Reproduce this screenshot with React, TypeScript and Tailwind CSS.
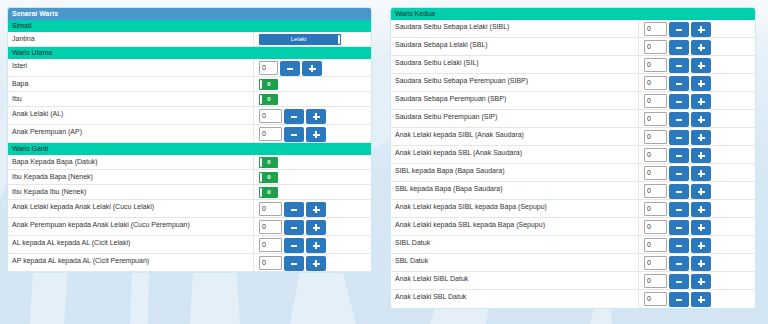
import React from "react";

type Kind = "count" | "narrow" | "toggle";
type Row = { label: string; kind: Kind } | { section: string };

const LEFT: Row[] = [
  { section: "Waris Utama" },
  { label: "Isteri", kind: "narrow" },
  { label: "Bapa", kind: "toggle" },
  { label: "Ibu", kind: "toggle" },
  { label: "Anak Lelaki (AL)", kind: "count" },
  { label: "Anak Perempuan (AP)", kind: "count" },
  { section: "Waris Ganti" },
  { label: "Bapa Kepada Bapa (Datuk)", kind: "toggle" },
  { label: "Ibu Kepada Bapa (Nenek)", kind: "toggle" },
  { label: "Ibu Kepada Ibu (Nenek)", kind: "toggle" },
  { label: "Anak Lelaki kepada Anak Lelaki (Cucu Lelaki)", kind: "count" },
  { label: "Anak Perempuan kepada Anak Lelaki (Cucu Perempuan)", kind: "count" },
  { label: "AL kepada AL kepada AL (Cicit Lelaki)", kind: "count" },
  { label: "AP kepada AL kepada AL (Cicit Perempuan)", kind: "count" },
];

const RIGHT: string[] = [
  "Saudara Seibu Sebapa Lelaki (SIBL)",
  "Saudara Sebapa Lelaki (SBL)",
  "Saudara Seibu Lelaki (SIL)",
  "Saudara Seibu Sebapa Perempuan (SIBP)",
  "Saudara Sebapa Perempuan (SBP)",
  "Saudara Seibu Perempuan (SIP)",
  "Anak Lelaki kepada SIBL (Anak Saudara)",
  "Anak Lelaki kepada SBL (Anak Saudara)",
  "SIBL kepada Bapa (Bapa Saudara)",
  "SBL kepada Bapa (Bapa Saudara)",
  "Anak Lelaki kepada SIBL kepada Bapa (Sepupu)",
  "Anak Lelaki kepada SBL kepada Bapa (Sepupu)",
  "SIBL Datuk",
  "SBL Datuk",
  "Anak Lelaki SIBL Datuk",
  "Anak Lelaki SBL Datuk",
];

function Stepper({ narrow }: { narrow?: boolean }) {
  return (
    <div className="flex items-start gap-[2px] pl-[5px] pt-[2px]">
      <div
        className={`${narrow ? "w-[19px]" : "w-[23px]"} h-[14px] rounded-[1px] border border-[#a8a8a8] bg-white pl-[2px] text-[7px] leading-[12px] text-[#333]`}
      >
        0
      </div>
      <button
        type="button"
        className="flex h-[15px] w-[20px] items-center justify-center rounded-[2px] bg-[#2a78bd]"
      >
        <span className="h-[2px] w-[6px] bg-white" />
      </button>
      <button
        type="button"
        className="relative flex h-[15px] w-[20px] items-center justify-center rounded-[2px] bg-[#2a78bd]"
      >
        <span className="h-[2px] w-[7px] bg-white" />
        <span className="absolute h-[7px] w-[2px] bg-white" />
      </button>
    </div>
  );
}

function Toggle() {
  return (
    <div className="pl-[5px] pt-[2px]">
      <div className="flex h-[11px] w-[19px] items-center rounded-[1px] bg-[#1fa04a]">
        <span className="ml-[1px] h-[9px] w-[2px] rounded-[1px] bg-white" />
        <span className="flex-1 pr-[2px] text-center text-[6px] font-bold leading-[11px] text-white">0</span>
      </div>
    </div>
  );
}

function Section({ title }: { title: string }) {
  return (
    <div className="h-[12px] bg-[#00cfae] pl-[4px] text-[7px] leading-[12px] text-[#1c2b2a]">{title}</div>
  );
}

function Line({ label, kind }: { label: string; kind: Kind }) {
  const h = kind === "toggle" ? "h-[15px]" : "h-[18px]";
  return (
    <div className={`grid grid-cols-[246px_1fr] border-b border-[#e6e6e6] ${h}`}>
      <div className="border-r border-[#e6e6e6] pl-[4px] pt-[2px] text-[7px] leading-[9px] text-[#333]">{label}</div>
      {kind === "toggle" ? <Toggle /> : <Stepper narrow={kind === "narrow"} />}
    </div>
  );
}

export default function App() {
  return (
    <div className="relative h-[324px] w-[768px] overflow-hidden bg-[linear-gradient(180deg,#f6f9fc_0px,#e6f0f8_60px,#d6e7f4_180px,#d3e5f3_324px)] font-['Liberation_Sans',Arial,sans-serif]">
      <svg className="absolute left-0 top-0" width="768" height="324" viewBox="0 0 768 324">
        <g fill="#e4eff8">
          <path d="M30 324 L36 210 L60 205 L70 240 L64 324 Z" />
          <path d="M130 324 L134 210 L150 208 L148 324 Z" />
          <path d="M190 324 L196 215 L232 210 L240 324 Z" />
          <path d="M290 324 L300 270 L340 262 L356 324 Z" />
          <path d="M430 324 L440 290 L470 280 L490 300 L486 324 Z" />
          <path d="M590 324 L596 300 L610 298 L612 324 Z" />
          <path d="M0 120 L8 100 L8 180 L0 200 Z" />
          <path d="M372 60 L390 52 L390 140 L372 150 Z" />
        </g>
      </svg>
      <div className="relative flex items-start gap-[18px] pl-[7px] pt-[7px]">
        <div className="w-[365px] overflow-hidden rounded-[3px] border border-[#c6ecf1] bg-white">
          <div className="h-[12px] bg-[#4a97cb] pl-[4px] text-[7px] font-bold leading-[12px] text-white">Senarai Waris</div>
          <Section title="Simati" />
          <div className="grid h-[15px] grid-cols-[246px_1fr] border-b border-[#e6e6e6]">
            <div className="border-r border-[#e6e6e6] pl-[4px] pt-[2px] text-[7px] leading-[9px] text-[#333]">Jantina</div>
            <div className="pl-[5px] pt-[2px]">
              <div className="flex h-[11px] w-[82px] items-center rounded-[1px] bg-[#2a74b9]">
                <span className="flex-1 text-center text-[6px] leading-[11px] text-white">Lelaki</span>
                <span className="mr-[1px] h-[9px] w-[2px] rounded-[1px] bg-white" />
              </div>
            </div>
          </div>
          {LEFT.map((r, i) =>
            "section" in r ? (
              <Section key={i} title={r.section} />
            ) : (
              <Line key={i} label={r.label} kind={r.kind} />
            )
          )}
        </div>
        <div className="w-[366px] overflow-hidden rounded-[3px] border border-[#c6ecf1] bg-white">
          <Section title="Waris Kedua" />
          {RIGHT.map((l) => (
            <div key={l} className="grid h-[18px] grid-cols-[248px_1fr] border-b border-[#e6e6e6] last:border-b-0">
              <div className="border-r border-[#e6e6e6] pl-[4px] pt-[2px] text-[7px] leading-[9px] text-[#333]">{l}</div>
              <Stepper />
            </div>
          ))}
        </div>
      </div>
    </div>
  );
}
